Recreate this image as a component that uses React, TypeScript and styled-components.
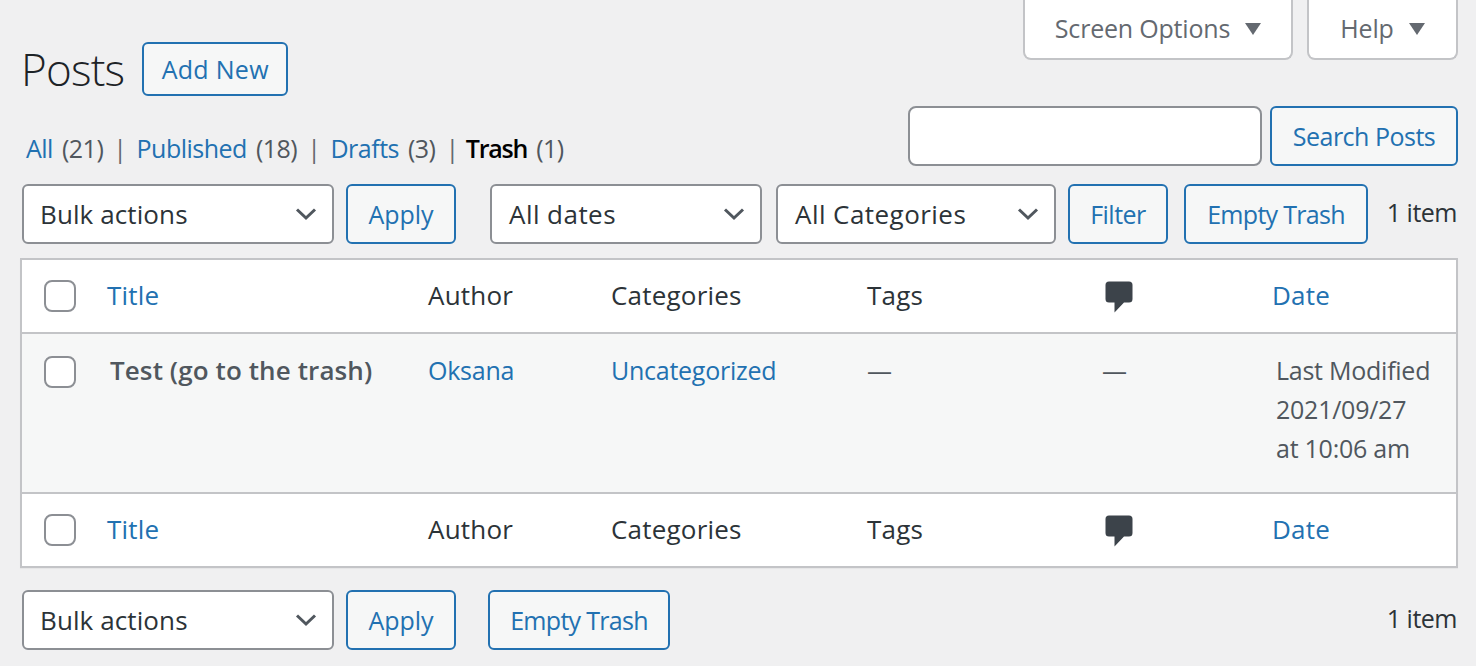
import React from "react";
import styled, { createGlobalStyle } from "styled-components";

const linkColor = "#2271b1";
const textColor = "#50575e";
const darkText = "#2c3338";
const lineColor = "#c3c4c7";
const inputLine = "#8c8f94";

const GlobalStyle = createGlobalStyle`
  html, body {
    margin: 0;
    padding: 0;
    height: 100%;
    background: #f0f0f1;
    overflow: hidden;
  }
  * {
    box-sizing: border-box;
  }
`;

const Page = styled.div`
  height: 666px;
  padding: 0 18px 0 20px;
  font-family: "Open Sans", "Noto Sans", sans-serif;
  font-size: 25px;
  letter-spacing: -0.5px;
  color: ${textColor};
`;

// Title and views on the left, screen tabs and search on the right
const TopArea = styled.div`
  display: flex;
  justify-content: space-between;
  height: 184px;
`;

const TopLeft = styled.div`
  display: flex;
  flex-direction: column;
  padding: 42px 0 0 2px;
`;

const TopRight = styled.div`
  display: flex;
  flex-direction: column;
  align-items: flex-end;
`;

const HeadingRow = styled.div`
  display: flex;
  align-items: center;
  gap: 18px;
  height: 54px;
`;

const Heading = styled.h1`
  margin: 0 0 0 -1px;
  font-size: 44px;
  font-weight: 300;
  letter-spacing: -0.8px;
  color: #1d2327;
  line-height: 54px;
`;

const Button = styled.div<{ $width: number; $height?: number; $spacing?: number }>`
  display: flex;
  align-items: center;
  justify-content: center;
  width: ${(p) => p.$width}px;
  height: ${(p) => p.$height ?? 60}px;
  flex: none;
  background: #f6f7f7;
  border: 2px solid ${linkColor};
  border-radius: 6px;
  color: ${linkColor};
  letter-spacing: ${(p) => p.$spacing ?? -0.5}px;
  white-space: nowrap;
`;

const Views = styled.div`
  display: flex;
  align-items: center;
  height: 40px;
  margin-top: 32px;
  padding-left: 4px;
  word-spacing: 3px;
  white-space: pre;
`;

const ViewLink = styled.span`
  color: ${linkColor};
`;

const ViewCurrent = styled.span`
  margin-left: -3px;
  color: #000;
  font-weight: 600;
  letter-spacing: -1.2px;
`;

const Divider = styled.span`
  margin: 0 10px;
  color: #646970;
`;

const TabRow = styled.div`
  display: flex;
  gap: 14px;
`;

const Tab = styled.div<{ $width: number }>`
  display: flex;
  align-items: center;
  justify-content: center;
  gap: 15px;
  width: ${(p) => p.$width}px;
  height: 60px;
  padding-bottom: 2px;
  background: #fff;
  border: 2px solid ${lineColor};
  border-top: none;
  border-radius: 0 0 8px 8px;
  color: #646970;
  letter-spacing: -0.2px;
`;

const CaretSvg = styled.svg`
  margin-top: 2px;
`;

const SearchRow = styled.div`
  display: flex;
  gap: 8px;
  margin-top: 46px;
`;

const SearchInput = styled.input`
  width: 354px;
  height: 60px;
  background: #fff;
  border: 2px solid ${inputLine};
  border-radius: 8px;
`;

const Toolbar = styled.div<{ $top?: number }>`
  display: flex;
  align-items: center;
  height: 60px;
  margin-top: ${(p) => p.$top ?? 0}px;
  padding-left: 2px;
`;

const Select = styled.div<{ $width: number; $left?: number; $loose?: boolean }>`
  display: flex;
  align-items: center;
  justify-content: space-between;
  width: ${(p) => p.$width}px;
  height: 60px;
  flex: none;
  margin-left: ${(p) => p.$left ?? 0}px;
  padding: 0 15px 0 ${(p) => (p.$loose ? 17 : 16)}px;
  background: #fff;
  border: 2px solid ${inputLine};
  border-radius: 6px;
  color: ${darkText};
  font-size: 26px;
  letter-spacing: ${(p) => (p.$loose ? 0.45 : 0.1)}px;
`;

const Gap = styled.div<{ $size: number }>`
  width: ${(p) => p.$size}px;
  flex: none;
`;

const ItemCount = styled.div`
  margin-left: auto;
  margin-right: 1px;
  padding-bottom: 4px;
  color: ${darkText};
`;

const Table = styled.div`
  margin-top: 14px;
  background: #fff;
  border: 2px solid ${lineColor};
  box-shadow: 0 1px 1px rgba(0, 0, 0, 0.04);
`;

const Row = styled.div<{ $height: number; $shaded?: boolean; $rule?: boolean }>`
  display: grid;
  grid-template-columns: 85px 321px 183px 256px 235px 170px 1fr;
  height: ${(p) => p.$height}px;
  background: ${(p) => (p.$shaded ? "#f6f7f7" : "#fff")};
  border-bottom: ${(p) => (p.$rule ? `2px solid ${lineColor}` : "none")};
`;

const HeadCell = styled.div`
  padding-top: 16px;
  line-height: 39px;
  font-size: 26px;
  letter-spacing: 0.2px;
  color: ${darkText};
`;

const BodyCell = styled.div<{ $indent?: number }>`
  padding-left: ${(p) => p.$indent ?? 0}px;
  padding-top: 17px;
  line-height: 39px;
  letter-spacing: -0.25px;
  color: ${textColor};
`;

const CheckCell = styled.div<{ $top: number }>`
  padding: ${(p) => p.$top}px 0 0 22px;
`;

const Checkbox = styled.input.attrs({ type: "checkbox" })`
  appearance: none;
  display: block;
  width: 32px;
  height: 32px;
  margin: 0;
  background: #fff;
  border: 2px solid ${inputLine};
  border-radius: 8px;
`;

const SortLink = styled.span`
  color: ${linkColor};
`;

const RowTitle = styled.span`
  font-size: 26px;
  font-weight: 600;
  letter-spacing: 0.1px;
  color: ${textColor};
`;

const IconCell = styled.div`
  padding: 21px 0 0 3px;
`;

const CommentSvg = styled.svg`
  display: block;
`;

const Chevron = () => (
  <svg width="22" height="14" viewBox="0 0 22 14" fill="none">
    <path d="M2 2.5 L11 11 L20 2.5" stroke="#50575e" strokeWidth="3" />
  </svg>
);

const Caret = () => (
  <CaretSvg width="16" height="12" viewBox="0 0 16 12">
    <path d="M0 0 H16 L8 12 Z" fill="#646970" />
  </CaretSvg>
);

const CommentIcon = () => (
  <CommentSvg width="28" height="32" viewBox="0 0 28 32">
    <path
      d="M4 0.5 H24 Q27.5 0.5 27.5 4 V18 Q27.5 21.5 24 21.5 H19 L9.5 31.5 V21.5 H4 Q0.5 21.5 0.5 18 V4 Q0.5 0.5 4 0.5 Z"
      fill="#3c434a"
    />
  </CommentSvg>
);

const HeaderRow = ({ height, rule }: { height: number; rule?: boolean }) => (
  <Row $height={height} $rule={rule}>
    <CheckCell $top={20}>
      <Checkbox readOnly />
    </CheckCell>
    <HeadCell>
      <SortLink>Title</SortLink>
    </HeadCell>
    <HeadCell>Author</HeadCell>
    <HeadCell>Categories</HeadCell>
    <HeadCell>Tags</HeadCell>
    <IconCell>
      <CommentIcon />
    </IconCell>
    <HeadCell>
      <SortLink>Date</SortLink>
    </HeadCell>
  </Row>
);

export default function App() {
  return (
    <Page>
      <GlobalStyle />
      <TopArea>
        <TopLeft>
          <HeadingRow>
            <Heading>Posts</Heading>
            <Button $width={146} $height={54} $spacing={0.3}>
              Add New
            </Button>
          </HeadingRow>
          <Views>
            <ViewLink>All</ViewLink> (21)
            <Divider>|</Divider>
            <ViewLink>Published</ViewLink> (18)
            <Divider>|</Divider>
            <ViewLink>Drafts</ViewLink> (3)
            <Divider>|</Divider>
            <ViewCurrent>Trash</ViewCurrent> (1)
          </Views>
        </TopLeft>
        <TopRight>
          <TabRow>
            <Tab $width={270}>
              Screen Options <Caret />
            </Tab>
            <Tab $width={151}>
              Help <Caret />
            </Tab>
          </TabRow>
          <SearchRow>
            <SearchInput />
            <Button $width={188}>Search Posts</Button>
          </SearchRow>
        </TopRight>
      </TopArea>

      <Toolbar>
        <Select $width={312}>
          Bulk actions <Chevron />
        </Select>
        <Gap $size={12} />
        <Button $width={110} $spacing={0}>
          Apply
        </Button>
        <Select $width={272} $left={34} $loose>
          All dates <Chevron />
        </Select>
        <Select $width={280} $left={14} $loose>
          All Categories <Chevron />
        </Select>
        <Gap $size={12} />
        <Button $width={100}>Filter</Button>
        <Gap $size={16} />
        <Button $width={184} $spacing={-0.7}>
          Empty Trash
        </Button>
        <ItemCount>1 item</ItemCount>
      </Toolbar>

      <Table>
        <HeaderRow height={74} rule />
        <Row $height={160} $shaded $rule>
          <CheckCell $top={22}>
            <Checkbox readOnly />
          </CheckCell>
          <BodyCell $indent={3}>
            <RowTitle>Test (go to the trash)</RowTitle>
          </BodyCell>
          <BodyCell>
            <SortLink>Oksana</SortLink>
          </BodyCell>
          <BodyCell>
            <SortLink>Uncategorized</SortLink>
          </BodyCell>
          <BodyCell>—</BodyCell>
          <BodyCell>—</BodyCell>
          <BodyCell $indent={4}>
            Last Modified
            <br />
            2021/09/27
            <br />
            at 10:06 am
          </BodyCell>
        </Row>
        <HeaderRow height={72} />
      </Table>

      <Toolbar $top={22}>
        <Select $width={312}>
          Bulk actions <Chevron />
        </Select>
        <Gap $size={12} />
        <Button $width={110} $spacing={0}>
          Apply
        </Button>
        <Gap $size={32} />
        <Button $width={182} $spacing={-0.7}>
          Empty Trash
        </Button>
        <ItemCount>1 item</ItemCount>
      </Toolbar>
    </Page>
  );
}
